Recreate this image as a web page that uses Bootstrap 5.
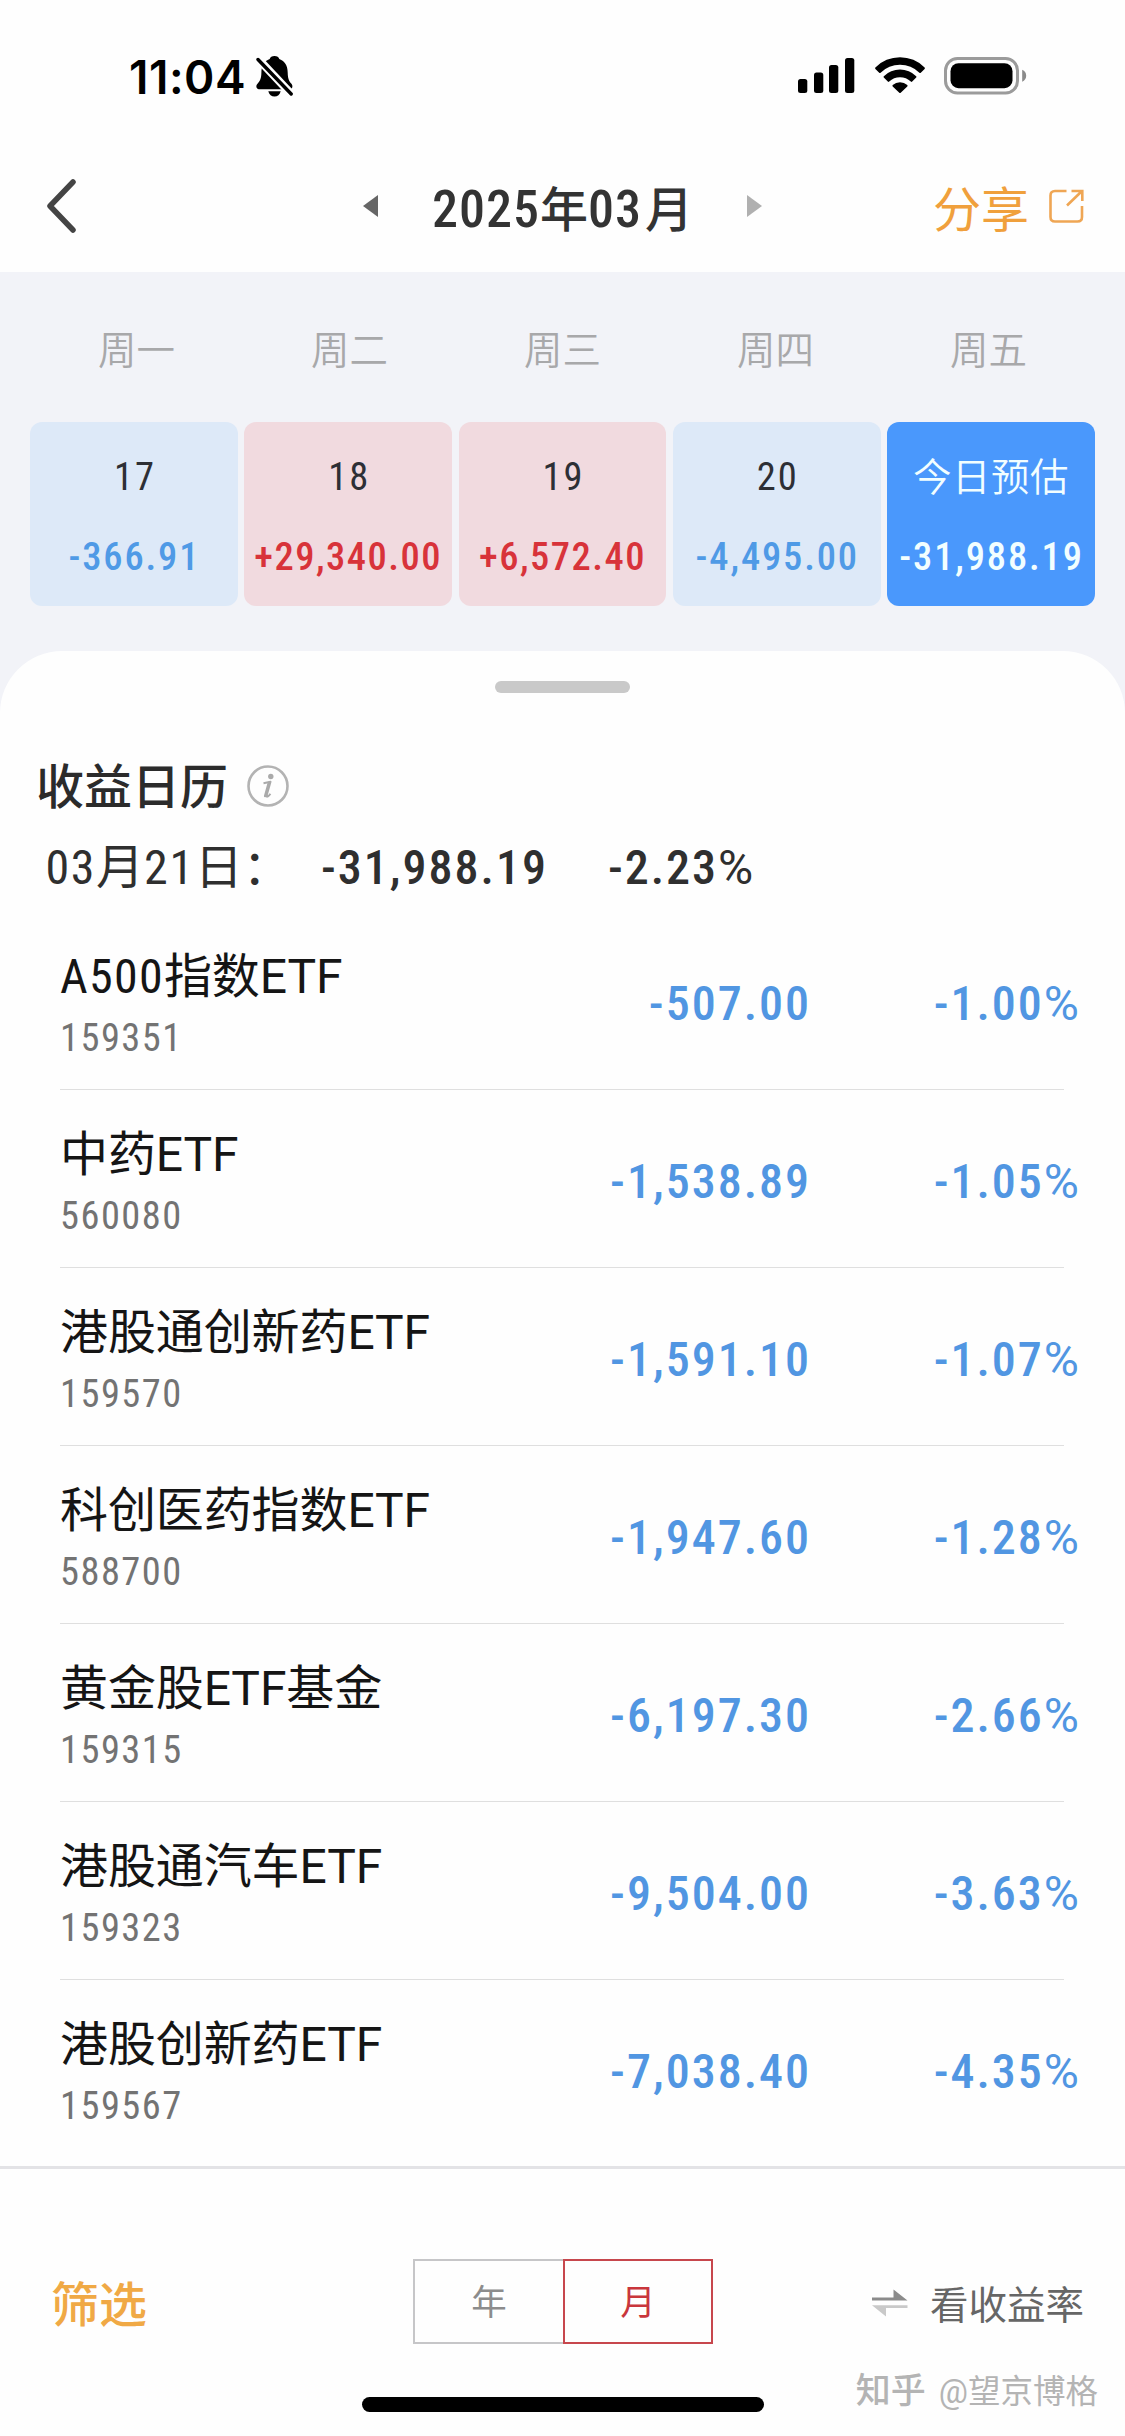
<!DOCTYPE html>
<html lang="zh-CN">
<head>
<meta charset="utf-8">
<meta name="viewport" content="width=device-width, initial-scale=1">
<title>收益日历</title>
<link href="https://cdn.jsdelivr.net/npm/bootstrap@5.3.0/dist/css/bootstrap.min.css" rel="stylesheet">
<style>
  body { font-family: Roboto, "Noto Sans CJK SC", sans-serif; background: #fefefe; color: #2f2f2f; }
  .screen { width: 1125px; height: 2436px; }
  .num { font-stretch: condensed; letter-spacing: 2px; font-weight: 500; }
  .num i { font-style: normal; font-stretch: normal; font-weight: 400; letter-spacing: 0; }
  svg { display: block; flex: none; }

  .status-bar { height: 136px; padding: 50px 98px 0 129px; color: #000; }
  .clock { font: 600 46px/54px Inter, sans-serif; letter-spacing: .5px; width: 127px; }
  .bell { margin-top: 5.5px; }
  .status-icon { margin-top: 7px; }

  .top-nav { height: 136px; padding: 6px 41px 0 47px; }
  .nav-side-l { width: 194px; }
  .nav-side-r { width: 200px; gap: 20px; }
  .month-switch { width: 399px; }
  .tri { margin-top: 53px; }
  .month-title { font-size: 48px; line-height: 60px; font-weight: 500; color: #333; margin-top: 37.5px; }
  .month-title .num { font-size: 52px; letter-spacing: 1px; }
  .month-title .yue { margin-left: 3px; }
  .share-text { font-size: 48px; line-height: 60px; color: #f0a03c; white-space: nowrap; margin-top: 39px; }

  .calendar { background: #f2f3f8; height: 439px; padding: 52px 30px 0; }
  .weekdays { font-size: 38.5px; line-height: 54px; font-weight: 350; color: #a8a8aa; margin-bottom: 44px; }
  .days { gap: 6.5px; }
  .day { height: 183.5px; border-radius: 12px; padding-top: 35px; font-size: 38.5px; line-height: 40px; }
  .day-date { font-stretch: condensed; letter-spacing: 2px; color: #2d2f35; margin-bottom: 40px; padding-left: 2px; }
  .day .num { letter-spacing: 1.85px; padding-left: 1px; white-space: nowrap; }
  .day.loss { background: #dde9f8; } .day.loss .num { color: #4f9ae6; }
  .day.gain { background: #f1dadf; } .day.gain .num { color: #d8333a; letter-spacing: 1.5px; padding-left: 0; }
  .day.today { background: #4a98fc; }
  .day.today .day-date, .day.today .num { color: #f2feff; }
  .day.today .day-date { letter-spacing: .5px; font-weight: 350; padding-left: 0; padding-top: 1px; margin-bottom: 39px; }

  .sheet { height: 1515px; margin-top: -60px; background: #fefefe; border-radius: 62px 62px 0 0; padding-top: 30px; }
  .grabber { width: 135px; height: 12px; border-radius: 6px; background: #c9c9c9; }
  .sheet-title { margin: 63px 0 0 36px; gap: 19px; font-size: 48px; line-height: 64px; font-weight: 500; color: #2b2b2b; height: 64px; }
  .info { margin-top: -5px; }
  .summary { margin-left: 45.5px; height: 60px; margin-top: 18px; font-size: 48px; line-height: 60px; }
  .summary-date { width: 275.5px; white-space: nowrap; }
  .summary-date .num { font-weight: 400; letter-spacing: 1.6px; }
  .summary-pct { margin-left: 60px; }

  .funds { margin: 14px 61px 0 60px; }
  .fund { height: 178px; border-bottom: 1px solid #dfdfdf; }
  .fund:last-child { border-bottom: 0; }
  .fund-id { width: 400px; padding-top: 41px; flex: none; }
  .fund-name { font-size: 48px; line-height: 48px; color: #151515; white-space: nowrap; letter-spacing: -.1px; }
  .fund-name .num { font-weight: 400; letter-spacing: 1.3px; }
  .fund-code { font-size: 38.4px; line-height: 40px; margin-top: 17px; font-stretch: condensed; letter-spacing: 1.5px; color: #737373; }
  .amount, .pct { font-size: 48px; line-height: 60px; color: #5196e2; padding-top: 6px; text-align: right; white-space: nowrap; flex: none; }
  .amount { width: 351px; }
  .pct { width: 268px; }

  .bottom-bar { height: 270px; border-top: 3px solid #e3e3e6; padding: 90px 41px 0 51px; }
  .filter { font-size: 48px; line-height: 84px; font-weight: 500; color: #f0a945; width: 362px; margin-top: 5px; }
  .period { width: 300px; height: 85px; }
  .period > div { border: 2px solid #c6c6c8; font-size: 35.5px; line-height: 84px; color: #8c8c8c; }
  .period > div:first-child { border-right: 0; }
  .period > .active { border-color: #c7474d; color: #c9363c; }
  .rate { font-size: 38.5px; line-height: 85px; color: #666; gap: 22px; white-space: nowrap; }
  .rate span { margin-top: 4px; }
  .home-bar { width: 402px; height: 15px; border-radius: 8px; background: #000; margin: 0 auto 24px; }
  .watermark { right: 27px; bottom: 19px; font-size: 32.5px; line-height: 50px; color: #b4b4b4; text-shadow: -1px -1px 0 #fff; white-space: nowrap; }
  .watermark .zhihu { font-size: 35px; margin-right: 5px; font-weight: 500; }
</style>
</head>
<body>
<div class="screen position-relative overflow-hidden mx-auto">

  <header>
    <div class="status-bar d-flex align-items-start">
      <div class="clock">11:04</div>
      <svg width="37" height="41" viewBox="0 0 37 41" class="bell me-auto">
        <path d="M18.5 0c2.6 0 4.300 1.300 4.800 3.100C29 5.200 31.600 10 31.700 16.500c.1 6 1.300 8.500 3.300 10.800 1.300 1.500 1.600 2.600 1.300 4-.3 1.300-1.300 2-3 2H4C2 33.300.600 32.500.400 31c-.2-1.500.3-2.500 1.500-3.800C4.200 24.800 5.300 22 5.400 16.500 5.500 10 8 5.200 13.700 3.100 14.200 1.300 15.900 0 18.500 0z" fill="#000"/>
        <path d="M12.300 35.200h12.400c-.8 3.300-3.200 5.300-6.200 5.300s-5.400-2-6.200-5.300z" fill="#000"/>
        <path d="M-1 -.5L38 41" stroke="#fefefe" stroke-width="8"/>
        <path d="M2 3.500L35.200 38" stroke="#000" stroke-width="3.400" stroke-linecap="round"/>
      </svg>
      <svg width="57" height="37" viewBox="0 0 57 37" class="status-icon" style="margin-right:20px">
        <rect x="0" y="22" width="9.300" height="14" rx="2.500"/><rect x="16" y="15.500" width="9.300" height="20.500" rx="2.500"/>
        <rect x="31" y="8" width="9.300" height="28" rx="2.500"/><rect x="47" y="1" width="9.300" height="35" rx="2.500"/>
      </svg>
      <svg width="50" height="37" viewBox="0 0 50 37" class="status-icon" style="margin-right:19px">
        <path d="M.4 10.500a34.500 34.500 0 0 1 49.200 0q.6.700 0 1.400l-3.800 3.900q-.7.600-1.400 0a27.500 27.500 0 0 0-38.800 0q-.7.600-1.400 0L.4 11.900q-.6-.7 0-1.400z"/>
        <path d="M8.800 19.200a23 23 0 0 1 32.400 0q.6.700 0 1.400l-4 4q-.7.600-1.400 0a15.500 15.500 0 0 0-21.600 0q-.7.600-1.400 0l-4-4q-.6-.7 0-1.400z"/>
        <path d="M17.700 28a11 11 0 0 1 14.600 0q.6.700 0 1.400l-6.600 6.400q-.7.600-1.400 0l-6.600-6.400q-.6-.7 0-1.400z"/>
      </svg>
      <svg width="83" height="38" viewBox="0 0 83 38" class="status-icon">
        <rect x="1.500" y="1.500" width="72" height="34.500" rx="12" fill="none" stroke="#9b9b9b" stroke-width="3"/>
        <rect x="6.500" y="6.200" width="62" height="25" rx="8" fill="#000"/>
        <path d="M78.200 12.800c2.500 1 4 3.300 4 6s-1.500 4.900-4 5.900z" fill="#8a8a8a"/>
      </svg>
    </div>

    <nav class="top-nav d-flex justify-content-between" aria-label="月份">
      <div class="nav-side-l d-flex">
        <svg width="29" height="54" viewBox="0 0 29 54" style="margin-top:37px"><path d="M26 3L3 27l23 24" fill="none" stroke="#444" stroke-width="5.500" stroke-linecap="round" stroke-linejoin="round"/></svg>
      </div>
      <div class="month-switch d-flex justify-content-between">
        <svg width="15" height="22" viewBox="0 0 15 22" class="tri"><path d="M15 0v22L0 11z" fill="#666"/></svg>
        <div class="month-title"><span class="num">2025</span>年<span class="num">03</span><span class="yue">月</span></div>
        <svg width="15" height="22" viewBox="0 0 15 22" class="tri"><path d="M0 0v22L15 11z" fill="#b0b0b0"/></svg>
      </div>
      <div class="nav-side-r d-flex justify-content-end">
        <div class="share-text">分享</div>
        <svg width="35" height="34" viewBox="0 0 35 34" style="margin-top:47px"><path d="M17.500 2H6Q1.500 2 1.500 6.500V28Q1.500 32.500 6 32.500H28.500Q33 32.500 33 28V17M18 16.500L33 2M22.500 2H33.300V12" fill="none" stroke="#efa654" stroke-width="2.600"/></svg>
      </div>
    </nav>
  </header>

  <section class="calendar">
    <div class="weekdays d-flex text-center">
      <div class="flex-fill w-25">周一</div><div class="flex-fill w-25">周二</div><div class="flex-fill w-25">周三</div><div class="flex-fill w-25">周四</div><div class="flex-fill w-25">周五</div>
    </div>
    <div class="days d-flex text-center">
      <div class="day loss flex-fill w-25"><div class="day-date">17</div><div class="num">-366.91</div></div>
      <div class="day gain flex-fill w-25"><div class="day-date">18</div><div class="num">+29,340.00</div></div>
      <div class="day gain flex-fill w-25"><div class="day-date">19</div><div class="num">+6,572.40</div></div>
      <div class="day loss flex-fill w-25"><div class="day-date">20</div><div class="num">-4,495.00</div></div>
      <div class="day today flex-fill w-25"><div class="day-date">今日预估</div><div class="num">-31,988.19</div></div>
    </div>
  </section>

  <main class="sheet position-relative">
    <div class="grabber mx-auto"></div>
    <h1 class="sheet-title d-flex align-items-center mb-0">收益日历
      <svg width="42" height="42" viewBox="0 0 42 42" class="info"><circle cx="21" cy="21" r="19.500" fill="none" stroke="#b3b3b3" stroke-width="2.600"/><circle cx="23.800" cy="11.500" r="2.700" fill="#aaa"/><path d="M16.500 18.300l7-1.500-3.800 13.500q-.5 2 1.200 1 1.300-.8 2.500-2.600" fill="none" stroke="#aaa" stroke-width="2" stroke-linejoin="round"/><path d="M21.800 18l-3.600 13" stroke="#aaa" stroke-width="2.600" stroke-linecap="round"/></svg>
    </h1>
    <div class="summary d-flex">
      <div class="summary-date"><span class="num">03</span>月<span class="num">21</span>日：</div>
      <div class="num">-31,988.19</div>
      <div class="num summary-pct">-2.23<i>%</i></div>
    </div>

    <div class="funds">
      <div class="fund d-flex align-items-center"><div class="fund-id align-self-start"><div class="fund-name"><span class="num">A500</span>指数ETF</div><div class="fund-code">159351</div></div><div class="amount num">-507.00</div><div class="pct num">-1.00<i>%</i></div></div>
      <div class="fund d-flex align-items-center"><div class="fund-id align-self-start"><div class="fund-name">中药ETF</div><div class="fund-code">560080</div></div><div class="amount num">-1,538.89</div><div class="pct num">-1.05<i>%</i></div></div>
      <div class="fund d-flex align-items-center"><div class="fund-id align-self-start"><div class="fund-name">港股通创新药ETF</div><div class="fund-code">159570</div></div><div class="amount num">-1,591.10</div><div class="pct num">-1.07<i>%</i></div></div>
      <div class="fund d-flex align-items-center"><div class="fund-id align-self-start"><div class="fund-name">科创医药指数ETF</div><div class="fund-code">588700</div></div><div class="amount num">-1,947.60</div><div class="pct num">-1.28<i>%</i></div></div>
      <div class="fund d-flex align-items-center"><div class="fund-id align-self-start"><div class="fund-name">黄金股ETF基金</div><div class="fund-code">159315</div></div><div class="amount num">-6,197.30</div><div class="pct num">-2.66<i>%</i></div></div>
      <div class="fund d-flex align-items-center"><div class="fund-id align-self-start"><div class="fund-name">港股通汽车ETF</div><div class="fund-code">159323</div></div><div class="amount num">-9,504.00</div><div class="pct num">-3.63<i>%</i></div></div>
      <div class="fund d-flex align-items-center"><div class="fund-id align-self-start"><div class="fund-name">港股创新药ETF</div><div class="fund-code">159567</div></div><div class="amount num">-7,038.40</div><div class="pct num">-4.35<i>%</i></div></div>
    </div>
  </main>

  <footer class="bottom-bar">
    <div class="d-flex align-items-start">
      <div class="filter">筛选</div>
      <div class="period d-flex text-center"><div class="w-50">年</div><div class="w-50 active">月</div></div>
      <div class="rate d-flex align-items-center ms-auto">
        <svg width="36" height="29" viewBox="0 0 36 29"><path d="M0 8.500h21.500V.5L35.500 11.500H0z" fill="#8b8b8b"/><path d="M35.500 19H14v8.500L0 16.300h35.500z" fill="#c9c9c9"/></svg>
        <span>看收益率</span>
      </div>
    </div>
  </footer>
  <div class="position-absolute bottom-0 start-0 w-100"><div class="home-bar"></div></div>
  <div class="watermark position-absolute"><span class="zhihu">知乎</span> @望京博格</div>
</div>
<script src="https://cdn.jsdelivr.net/npm/bootstrap@5.3.0/dist/js/bootstrap.bundle.min.js"></script>
</body>
</html>
